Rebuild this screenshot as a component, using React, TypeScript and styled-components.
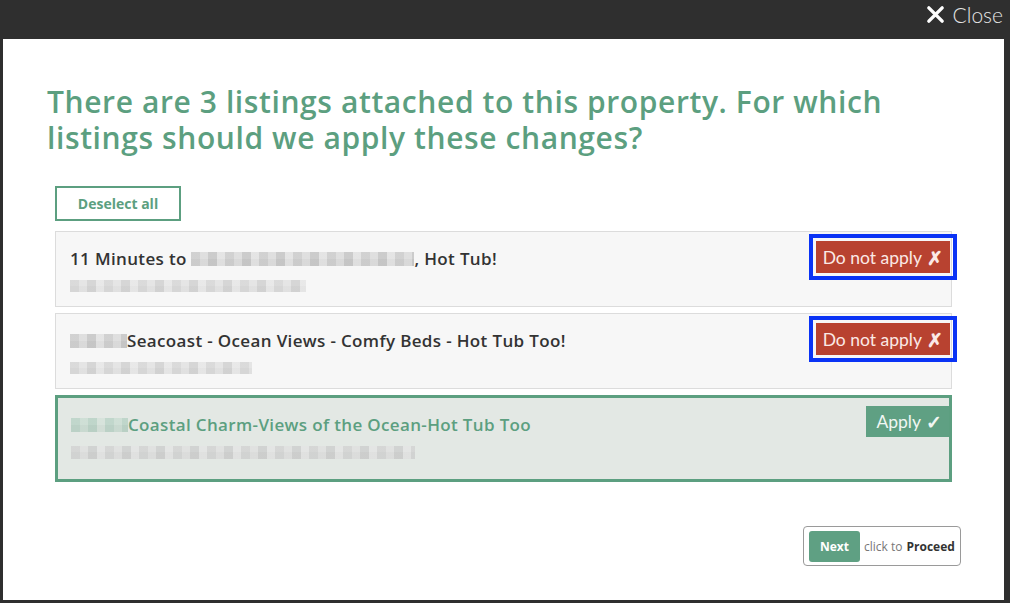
import React from "react";
import styled, { createGlobalStyle } from "styled-components";

const Global = createGlobalStyle`
  html, body { margin: 0; padding: 0; background: #2f2f2f; }
  body { font-family: "Open Sans", "Liberation Sans", sans-serif; }
  * { box-sizing: border-box; }
`;

const Page = styled.div`
  width: 1010px;
  height: 603px;
  background: #2f2f2f;
  display: flex;
  flex-direction: column;
  overflow: hidden;
`;

const TopBar = styled.div`
  height: 39px;
  display: flex;
  justify-content: flex-end;
  align-items: center;
  padding: 0 7px 11px 0;
`;

const CloseButton = styled.button`
  display: flex;
  align-items: center;
  gap: 8px;
  background: none;
  border: none;
  padding: 0;
  color: #e4e4e4;
  font-family: "Lato", "Liberation Sans", sans-serif;
  font-size: 21px;
  font-weight: 300;
  cursor: pointer;
`;

const Modal = styled.div`
  margin: 0 6px 3px 3px;
  flex: 1;
  background: #fff;
  padding: 45px 50px 34px 44px;
  display: flex;
  flex-direction: column;
`;

const Title = styled.h1`
  margin: 0 0 30px 0;
  color: #5c9f80;
  font-family: "Open Sans", "Liberation Sans", sans-serif;
  font-weight: 600;
  font-size: 30px;
  line-height: 36px;
  letter-spacing: 0.6px;
`;

const Content = styled.div`
  padding-left: 8px;
  display: flex;
  flex-direction: column;
`;

const DeselectButton = styled.button`
  align-self: flex-start;
  width: 126px;
  height: 35px;
  border: 2px solid #5c9f80;
  background: #fff;
  color: #5c9f80;
  font-family: "Open Sans", "Liberation Sans", sans-serif;
  font-weight: 700;
  font-size: 14px;
  margin-bottom: 10px;
  cursor: pointer;
`;

const List = styled.div`
  display: flex;
  flex-direction: column;
  gap: 6px;
  width: 897px;
`;

const Row = styled.div<{ $selected?: boolean }>`
  display: flex;
  justify-content: space-between;
  align-items: flex-start;
  border: ${(p) => (p.$selected ? "3px solid #5c9f80" : "1px solid #dcdcdc")};
  background: ${(p) => (p.$selected ? "#e3e8e4" : "#f7f7f7")};
  height: ${(p) => (p.$selected ? "87px" : "76px")};
  padding: ${(p) => (p.$selected ? "16px 0 0 13px" : "16px 1px 0 14px")};
`;

const RowText = styled.div`
  display: flex;
  flex-direction: column;
  gap: 10px;
`;

const RowTitle = styled.div<{ $selected?: boolean }>`
  display: flex;
  align-items: center;
  font-family: "Open Sans", "Liberation Sans", sans-serif;
  font-weight: 600;
  font-size: 17px;
  line-height: 22px;
  letter-spacing: 0.35px;
  color: ${(p) => (p.$selected ? "#5c9f80" : "#333")};
  white-space: nowrap;
`;

const Blur = styled.span<{ $w: number; $h?: number; $green?: boolean }>`
  display: inline-block;
  width: ${(p) => p.$w}px;
  height: ${(p) => p.$h ?? 14}px;
  background:
    repeating-linear-gradient(
      90deg,
      ${(p) => (p.$green ? "rgba(160,200,180,0.55)" : "rgba(190,190,190,0.55)")} 0 9px,
      ${(p) => (p.$green ? "rgba(185,215,198,0.55)" : "rgba(215,215,215,0.55)")} 9px 17px,
      ${(p) => (p.$green ? "rgba(150,195,172,0.5)" : "rgba(175,175,175,0.5)")} 17px 26px,
      ${(p) => (p.$green ? "rgba(200,222,208,0.55)" : "rgba(225,225,225,0.55)")} 26px 34px
    ),
    linear-gradient(180deg, #e9e9e9 0 50%, #dcdcdc 50% 100%);
`;

const SubLine = styled(Blur)`
  opacity: 0.75;
`;

const Badge = styled.span<{ $variant: "reject" | "apply"; $outlined?: boolean }>`
  display: inline-flex;
  align-items: center;
  gap: 5px;
  margin-top: ${(p) => (p.$variant === "reject" ? "-7px" : "-8px")};
  height: ${(p) => (p.$variant === "reject" ? "32px" : "31px")};
  padding: ${(p) => (p.$variant === "reject" ? "0 7px 0 7px" : "0 7px 0 10px")};
  background: ${(p) => (p.$variant === "reject" ? "#b84230" : "#5fa083")};
  color: ${(p) => (p.$variant === "reject" ? "#fbe9e6" : "#f1f7f3")};
  font-family: "Lato", "Liberation Sans", sans-serif;
  font-weight: 400;
  font-size: 17.5px;
  outline: ${(p) => (p.$outlined ? "4px solid #0a33f5" : "none")};
  outline-offset: 3px;
`;

const Mark = styled.span`
  font-weight: 700;
  font-size: 19px;
`;

const Footer = styled.div`
  margin-top: auto;
  display: flex;
  justify-content: flex-end;
  margin-right: -7px;
`;

const NextBox = styled.div`
  display: flex;
  align-items: center;
  gap: 4px;
  width: 158px;
  height: 40px;
  padding: 0 5px;
  border: 1px solid #9a9a9a;
  border-radius: 4px;
  font-family: "Open Sans", "Liberation Sans", sans-serif;
  font-size: 12px;
  color: #777;
  white-space: nowrap;
`;

const NextButton = styled.button`
  width: 51px;
  height: 31px;
  border: none;
  border-radius: 3px;
  background: #5fa083;
  color: #fff;
  font-family: "Open Sans", "Liberation Sans", sans-serif;
  font-weight: 700;
  font-size: 12px;
  cursor: pointer;
`;

const Strong = styled.b`
  color: #333;
  font-weight: 700;
`;

const XIcon = () => (
  <svg width="19" height="19" viewBox="0 0 20 20">
    <path d="M3 3 L17 17 M17 3 L3 17" stroke="#fff" strokeWidth="3.6" strokeLinecap="round" />
  </svg>
);

export default function App() {
  return (
    <Page>
      <Global />
      <TopBar>
        <CloseButton>
          <XIcon />
          Close
        </CloseButton>
      </TopBar>
      <Modal>
        <Title>
          There are 3 listings attached to this property. For which listings should we apply these
          changes?
        </Title>
        <Content>
          <DeselectButton>Deselect all</DeselectButton>
          <List>
            <Row>
              <RowText>
                <RowTitle>
                  11 Minutes to&nbsp;<Blur $w={223} />, Hot Tub!
                </RowTitle>
                <SubLine $w={236} $h={12} />
              </RowText>
              <Badge $variant="reject" $outlined>
                Do not apply <Mark>✗</Mark>
              </Badge>
            </Row>
            <Row>
              <RowText>
                <RowTitle>
                  <Blur $w={57} />
                  Seacoast - Ocean Views - Comfy Beds - Hot Tub Too!
                </RowTitle>
                <SubLine $w={182} $h={12} />
              </RowText>
              <Badge $variant="reject" $outlined>
                Do not apply <Mark>✗</Mark>
              </Badge>
            </Row>
            <Row $selected>
              <RowText>
                <RowTitle $selected>
                  <Blur $w={57} $green />
                  Coastal Charm-Views of the Ocean-Hot Tub Too
                </RowTitle>
                <SubLine $w={344} $h={13} />
              </RowText>
              <Badge $variant="apply">
                Apply <Mark>✓</Mark>
              </Badge>
            </Row>
          </List>
        </Content>
        <Footer>
          <NextBox>
            <NextButton>Next</NextButton>
            click to <Strong>Proceed</Strong>
          </NextBox>
        </Footer>
      </Modal>
    </Page>
  );
}
